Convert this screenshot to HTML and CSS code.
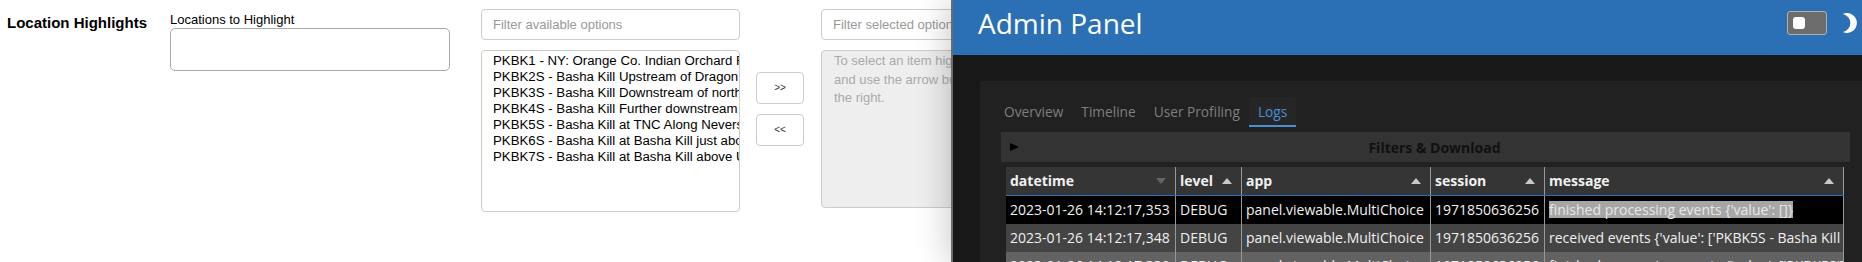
FILE: index.html
```html
<!DOCTYPE html>
<html>
<head>
<meta charset="utf-8">
<link rel="stylesheet" href="styles.css">
</head>
<body>
<div class="page">
  <div class="section-title">Location Highlights</div>
  <div class="field">
    <div class="field-label">Locations to Highlight</div>
    <div class="big-input"></div>
  </div>
  <div class="cross">
    <div class="cross-col">
      <div class="filter">Filter available options</div>
      <div class="listbox">
        <div>PKBK1 - NY: Orange Co. Indian Orchard Road</div>
        <div>PKBK2S - Basha Kill Upstream of Dragon Pond</div>
        <div>PKBK3S - Basha Kill Downstream of north wetland</div>
        <div>PKBK4S - Basha Kill Further downstream of wetland</div>
        <div>PKBK5S - Basha Kill at TNC Along Neversink</div>
        <div>PKBK6S - Basha Kill at Basha Kill just above dam</div>
        <div>PKBK7S - Basha Kill at Basha Kill above Urbach</div>
      </div>
    </div>
    <div class="cross-btns">
      <div class="cross-btn">&gt;&gt;</div>
      <div class="cross-btn">&lt;&lt;</div>
    </div>
    <div class="cross-col">
      <div class="filter">Filter selected options</div>
      <div class="listbox empty">To select an item highlight it on the left<br>and use the arrow buttons to move it to<br>the right.</div>
    </div>
  </div>
</div>

<div class="admin">
  <div class="admin-header">
    <div class="admin-title">Admin Panel</div>
    <div class="toggle"><div class="knob"></div></div>
    <svg class="moon" viewBox="0 0 16 20" width="15" height="20">
      <path d="M1,0.3 A10.6,10.6 0 1,1 1,19.7 A9.9,9.9 0 0,0 1,0.3 Z" fill="#fff"/>
    </svg>
  </div>
  <div class="admin-body">
    <div class="card">
      <div class="tabs">
        <div class="tab">Overview</div>
        <div class="tab">Timeline</div>
        <div class="tab">User Profiling</div>
        <div class="tab active">Logs</div>
      </div>
      <div class="pane">
        <div class="filterbar">
          <span class="caret"></span>
          <span class="filterbar-title">Filters &amp; Download</span>
        </div>
        <div class="grid">
          <div class="row head">
            <div class="cell"><span>datetime</span><span class="arrow down"></span></div>
            <div class="cell"><span>level</span><span class="arrow up"></span></div>
            <div class="cell"><span>app</span><span class="arrow up"></span></div>
            <div class="cell"><span>session</span><span class="arrow up"></span></div>
            <div class="cell"><span>message</span><span class="arrow up"></span></div>
          </div>
          <div class="row r1">
            <div class="cell">2023-01-26 14:12:17,353</div>
            <div class="cell">DEBUG</div>
            <div class="cell">panel.viewable.MultiChoice</div>
            <div class="cell">1971850636256</div>
            <div class="cell"><span class="sel">finished processing events {'value': []}</span></div>
          </div>
          <div class="row r2">
            <div class="cell">2023-01-26 14:12:17,348</div>
            <div class="cell">DEBUG</div>
            <div class="cell">panel.viewable.MultiChoice</div>
            <div class="cell">1971850636256</div>
            <div class="cell">received events {'value': ['PKBK5S - Basha Kill at TNC']}</div>
          </div>
          <div class="row r3">
            <div class="cell">2023-01-26 14:12:17,339</div>
            <div class="cell">DEBUG</div>
            <div class="cell">panel.viewable.MultiChoice</div>
            <div class="cell">1971850636256</div>
            <div class="cell">finished processing events {'value': ['PKBK5S']}</div>
          </div>
        </div>
      </div>
    </div>
  </div>
</div>
</body>
</html>
```

FILE: styles.css
```css
* { box-sizing: border-box; }
html, body { margin: 0; padding: 0; }
body {
  width: 1862px;
  height: 262px;
  overflow: hidden;
  background: #fff;
  position: relative;
  font-family: "Liberation Sans", Arial, sans-serif;
  color: #000;
}

.page { display: flex; align-items: flex-start; padding-left: 7px; }
.section-title {
  width: 163px;
  margin-top: 14px;
  font-weight: bold;
  font-size: 15px;
  line-height: 17px;
}
.field { width: 280px; margin-top: 12px; }
.field-label { font-size: 13px; line-height: 15px; }
.big-input {
  margin-top: 1px;
  height: 43px;
  border: 1px solid #a9a9a9;
  border-radius: 5px;
}

.cross { display: flex; align-items: flex-start; margin-left: 31px; margin-top: 9px; }
.cross-col { width: 259px; display: flex; flex-direction: column; gap: 10px; }
.filter {
  height: 31px;
  border: 1px solid #ccc;
  border-radius: 4px;
  padding: 0 11px;
  font-size: 13px;
  line-height: 29px;
  color: #999;
  white-space: nowrap;
  overflow: hidden;
}
.listbox {
  height: 162px;
  border: 1px solid #ccc;
  border-radius: 4px;
  padding: 2px 0 0 11px;
  font-size: 13.25px;
  line-height: 16px;
  white-space: nowrap;
  overflow: hidden;
}
.listbox.empty {
  height: 158px;
  background: #eee;
  color: #aaa;
  font-size: 13px;
  line-height: 18.57px;
  padding: 1px 12px 0;
}
.cross-btns {
  width: 48px;
  margin: 63px 17px 0 16px;
  display: flex;
  flex-direction: column;
  gap: 10px;
}
.cross-btn {
  height: 32px;
  border: 1px solid #ccc;
  border-radius: 4px;
  background: #fff;
  font-size: 10px;
  line-height: 12px;
  color: #333;
  display: flex;
  align-items: center;
  justify-content: center;
}

.admin {
  position: absolute;
  top: 0;
  left: 951px;
  right: 0;
  bottom: 0;
  border-left: 2px solid #6c6c6c;
  background: #181818;
  box-shadow: -6px 0 28px rgba(0, 0, 0, 0.18);
  font-family: "Open Sans", "Noto Sans", sans-serif;
  overflow: hidden;
}
.admin-header {
  height: 55px;
  background: #2b6fb5;
  display: flex;
  align-items: flex-start;
  padding-left: 25px;
}
.admin-title {
  flex: 1;
  color: #fff;
  font-size: 28px;
  line-height: 38px;
  margin-top: 4px;
}
.toggle {
  width: 40px;
  height: 24px;
  margin-top: 11px;
  border: 1px solid #b0b0b0;
  border-radius: 3px;
  background: #6d6d6d;
  padding: 5px;
}
.knob { width: 12px; height: 12px; border-radius: 3px; background: #fff; }
.moon { display: block; margin: 13px 5px 0 15px; }

.admin-body { padding: 26px 0 0 27px; height: 207px; }
.card { background: #212121; height: 100%; padding: 16px 0 0 15px; }
.tabs { display: flex; height: 30px; }
.tab {
  padding: 0 9px 0 9px;
  font-size: 13.7px;
  line-height: 30px;
  color: #7f7f7f;
}
.tab.active {
  color: #4a8fd6;
  background: #262626;
  border-radius: 3px 3px 0 0;
  box-shadow: inset 0 -2px 0 #4a8fd6;
}
.pane { margin: 5px 0 0 6px; }
.filterbar {
  width: 849px;
  height: 30px;
  background: #333;
  display: flex;
  align-items: center;
  padding-left: 9px;
}
.caret {
  width: 0;
  height: 0;
  border-left: 9px solid #000;
  border-top: 4.5px solid transparent;
  border-bottom: 4.5px solid transparent;
}
.filterbar-title {
  flex: 1;
  text-align: center;
  font-weight: bold;
  font-size: 14px;
  color: #111;
}
.grid { margin: 5px 0 0 5px; width: 838px; }
.row {
  display: grid;
  grid-template-columns: 170px 66px 189px 114px 299px;
  height: 28px;
  color: #f0f0f0;
  font-size: 14px;
  line-height: 28px;
}
.row.head { height: 29px; background: #353535; border-bottom: 1px solid #2b6fb5; font-weight: bold; }
.r1 { background: #000; }
.r2 { background: #444; }
.r3 { background: #626262; }
.cell {
  border-right: 1px solid #999;
  padding: 0 4px;
  white-space: nowrap;
  overflow: hidden;
}
.head .cell {
  display: flex;
  align-items: center;
  justify-content: space-between;
  padding-right: 9px;
}
.arrow { width: 0; height: 0; border-left: 5.5px solid transparent; border-right: 5.5px solid transparent; }
.arrow.up { border-bottom: 6px solid #c8c8c8; }
.arrow.down { border-top: 6px solid #666; }
.sel {
  display: inline-block;
  line-height: 17px;
  background: #a6a6a6;
  color: #e6e6e6;
}
```
